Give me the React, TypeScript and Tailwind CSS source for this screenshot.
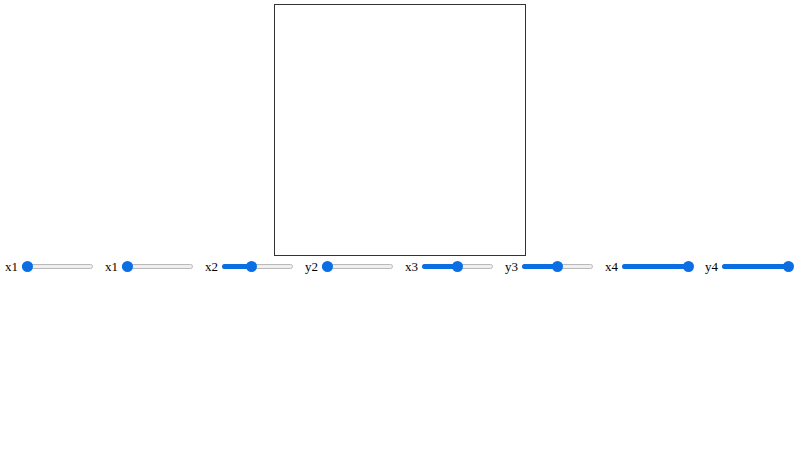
function Slider({ frac }: { frac: number }) {
  const center = 5 + frac * 61;
  return (
    <div className="relative ml-[4px] w-[71px] h-[14px] flex items-center">
      <div className="w-full h-[5px] rounded-full bg-[#efefef] border border-[#b9b9b9]" />
      <div
        className="absolute left-0 top-[4.5px] h-[5px] rounded-full bg-[#0b6fe3]"
        style={{ width: `${center}px` }}
      />
      <div
        className="absolute top-[1.5px] w-[11px] h-[11px] rounded-full bg-[#0b6fe3]"
        style={{ left: `${center - 5.5}px` }}
      />
    </div>
  );
}

export default function App() {
  const sliders: [string, number][] = [
    ["x1", 0],
    ["x1", 0],
    ["x2", 0.4],
    ["y2", 0],
    ["x3", 0.5],
    ["y3", 0.5],
    ["x4", 1],
    ["y4", 1],
  ];
  return (
    <div className="w-[800px] h-[450px] bg-white" style={{ fontFamily: '"Liberation Serif", serif' }}>
      <div className="pt-[4px] flex justify-center">
        <div className="w-[252px] h-[252px] border border-[#333]" />
      </div>
      <div className="flex h-[20px]">
        {sliders.map(([label, v], i) => (
          <div key={i} className="w-[100px] flex items-center pl-[5px]">
            <span className="text-[13px] leading-none text-black w-[13px]">{label}</span>
            <Slider frac={v} />
          </div>
        ))}
      </div>
    </div>
  );
}
